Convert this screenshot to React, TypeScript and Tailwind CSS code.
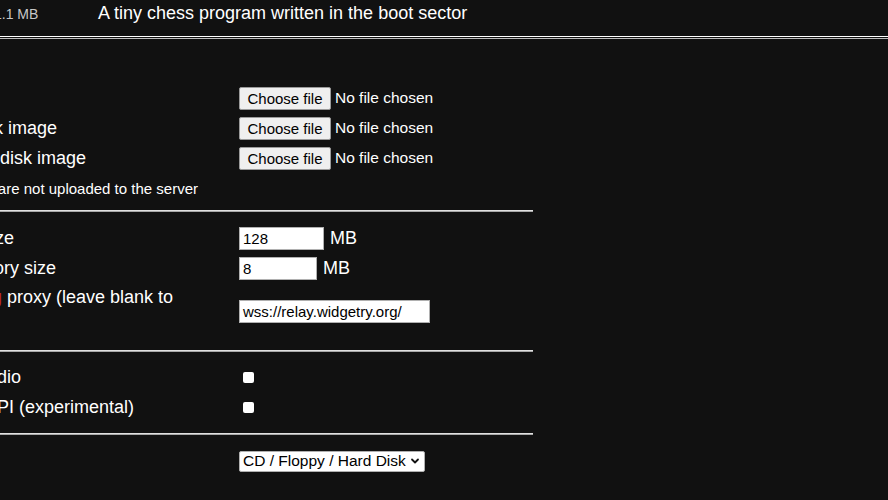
import React from "react";

function FileInput() {
  return (
    <div className="flex items-center">
      <div className="h-[23px] w-[92px] flex items-center justify-center bg-[#efefef] border border-[#9a9a9a] rounded-[2px] text-black text-[15px] leading-none">
        Choose file
      </div>
      <span className="ml-[4px] text-[15.5px] text-white leading-none">No file chosen</span>
    </div>
  );
}

function TextBox({ value, w }: { value: string; w: string }) {
  return (
    <div className={`h-[23px] ${w} bg-white border border-[#b0b0b0] flex items-center pl-[3px] text-black text-[15px] leading-none`}>
      {value}
    </div>
  );
}

function Check() {
  return <div className="ml-[4px] w-[11px] h-[11px] bg-white rounded-[2px]" />;
}

function Row({ label, children }: { label: React.ReactNode; children?: React.ReactNode }) {
  return (
    <div className="flex h-[30px] items-center">
      <div className="w-[327px] shrink-0 text-[18px] leading-[21px] whitespace-nowrap">{label}</div>
      {children}
    </div>
  );
}

function Hr() {
  return (
    <div className="w-[621px] h-[2px] flex flex-col">
      <div className="h-px bg-[#e0e0e0]" />
      <div className="h-px bg-[#a8a8a8]" />
    </div>
  );
}

export default function App() {
  return (
    <div className="w-[888px] h-[500px] overflow-hidden bg-[#111111] text-white font-['Liberation_Sans',Arial,sans-serif]">
      <div className="ml-[-88px] w-[976px]">
        {/* OS list row */}
        <div className="h-[36px] flex items-start">
          <div className="ml-[82px] w-[104px] pt-[6px] text-[14px] leading-[16px] text-[#c8c8c8]">1.1 MB</div>
          <div className="pt-[3px] text-[18px] leading-[20px] text-white whitespace-nowrap">
            A tiny chess program written in the boot sector
          </div>
        </div>
        <div className="h-px bg-white" />
        <div className="h-px bg-[#111111]" />
        <div className="h-px bg-[#bdbdbd]" />

        {/* Files */}
        <div className="pt-[44px]">
          <Row label="CD image">
            <FileInput />
          </Row>
          <Row label="Floppy disk image">
            <FileInput />
          </Row>
          <Row label="Hard drive disk image">
            <FileInput />
          </Row>
          <div className="h-[30px] flex items-center text-[15px] leading-none whitespace-nowrap">
            Disk images are not uploaded to the server
          </div>
        </div>
        <div className="mt-[7px]">
          <Hr />
        </div>

        {/* Memory settings */}
        <div className="pt-[11px]">
          <Row label="Memory size">
            <TextBox value="128" w="w-[85px]" />
            <span className="ml-[6px] text-[18px] leading-none">MB</span>
          </Row>
          <Row label="VGA Memory size">
            <TextBox value="8" w="w-[78px]" />
            <span className="ml-[6px] text-[18px] leading-none">MB</span>
          </Row>
          <div className="flex items-start h-[67px]">
            <div className="w-[327px] shrink-0 pt-[4px] text-[18px] leading-[21px]">
              <span className="text-[#b52a2a]">Networking</span> proxy (leave blank to disable)
            </div>
            <div className="mt-[17px]">
              <TextBox value="wss://relay.widgetry.org/" w="w-[191px]" />
            </div>
          </div>
        </div>
        <Hr />

        {/* Checkboxes */}
        <div className="pt-[10px]">
          <Row label="Disable audio">
            <Check />
          </Row>
          <Row label="Enable ACPI (experimental)">
            <Check />
          </Row>
        </div>
        <div className="mt-[11px]">
          <Hr />
        </div>

        {/* Boot order */}
        <div className="pt-[11px]">
          <Row label="Boot order">
            <div className="h-[21px] w-[186px] bg-white border border-[#b0b0b0] rounded-[2px] flex items-center pl-[3px] pr-[4px] text-black text-[15.5px] leading-none">
              <span className="flex-1 whitespace-nowrap">CD / Floppy / Hard Disk</span>
              <svg width="10" height="10" viewBox="0 0 10 10" className="shrink-0">
                <path d="M2 3.5 L5 6.5 L8 3.5" fill="none" stroke="#111" strokeWidth="1.8" strokeLinecap="round" strokeLinejoin="round" />
              </svg>
            </div>
          </Row>
        </div>
      </div>
    </div>
  );
}
